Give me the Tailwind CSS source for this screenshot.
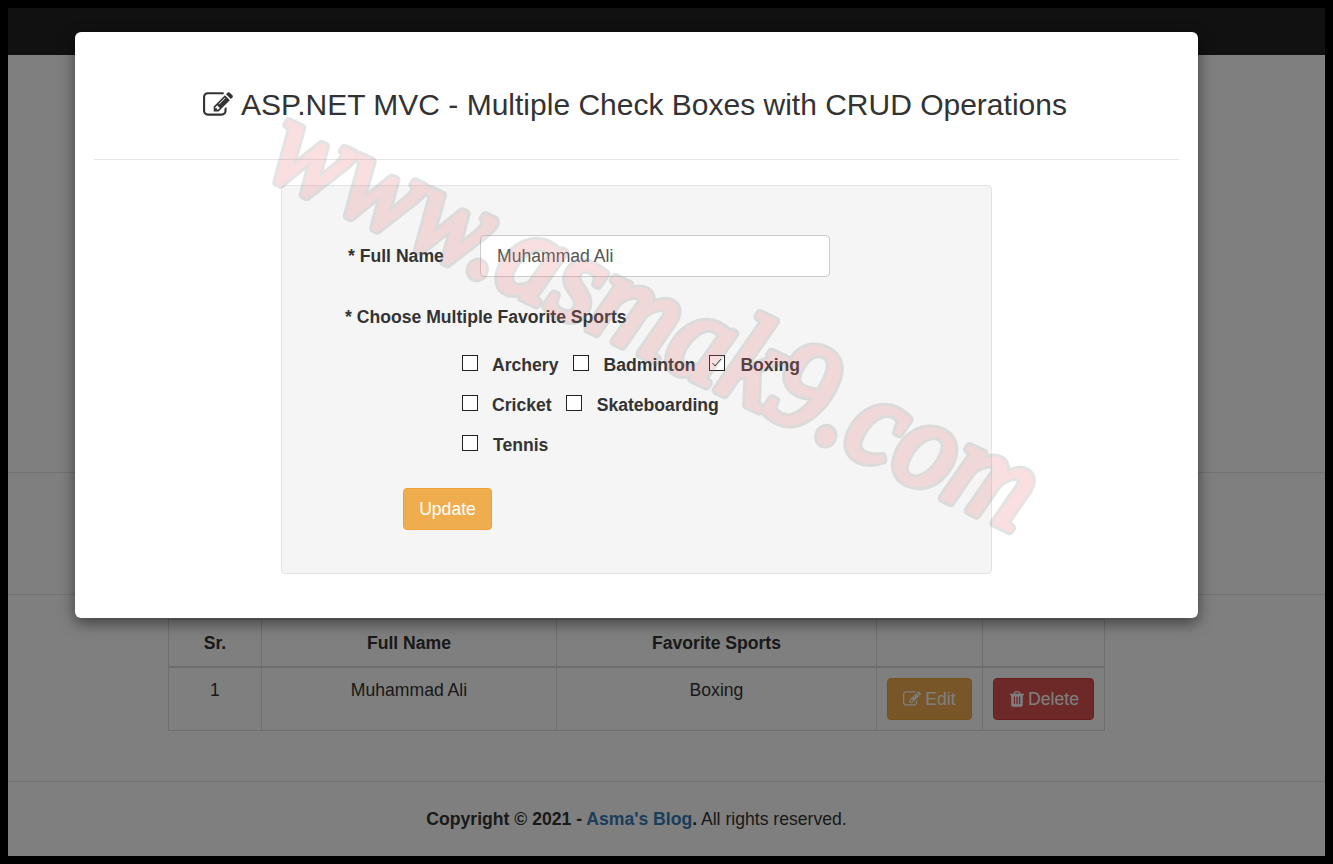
<!DOCTYPE html>
<html>
<head>
<meta charset="utf-8">
<script src="https://cdn.jsdelivr.net/npm/@tailwindcss/browser@4"></script>
<title>ASP.NET MVC</title>
</head>
<body class="bg-black">
<div class="relative h-[864px] w-[1333px] overflow-hidden border-8 border-black font-['Liberation_Sans',Arial,sans-serif] text-[17.6px] text-[#333]">
  <!-- page under the backdrop -->
  <div class="flex h-full flex-col bg-white">
    <div class="h-[47px] shrink-0 bg-[#222]"></div>
    <div class="mt-[417px] h-px shrink-0 bg-[#e5e5e5]"></div>
    <div class="mt-[121px] h-px shrink-0 bg-[#e5e5e5]"></div>
    <table class="ml-[160px] mt-[24px] w-[937px] shrink-0 table-fixed border-collapse text-center">
      <colgroup><col class="w-[93px]"><col class="w-[295px]"><col class="w-[320px]"><col class="w-[106px]"><col class="w-[122px]"></colgroup>
      <thead>
        <tr class="h-[47px]">
          <th class="border border-b-2 border-[#ddd] font-bold">Sr.</th>
          <th class="border border-b-2 border-[#ddd] font-bold">Full Name</th>
          <th class="border border-b-2 border-[#ddd] font-bold">Favorite Sports</th>
          <th class="border border-b-2 border-[#ddd]"></th>
          <th class="border border-b-2 border-[#ddd]"></th>
        </tr>
      </thead>
      <tbody>
        <tr class="h-[64px]">
          <td class="border border-[#ddd] pb-[18px] align-middle">1</td>
          <td class="border border-[#ddd] pb-[18px] align-middle">Muhammad Ali</td>
          <td class="border border-[#ddd] pb-[18px] align-middle">Boxing</td>
          <td class="border border-[#ddd] align-middle">
            <span class="mx-auto flex h-[42px] w-[85px] items-center justify-center gap-[4px] rounded border border-[#eea236] bg-[#f0ad4e] text-white">
              <svg class="h-[18px] w-[18px] fill-current" viewBox="0 0 1792 1792"><path d="M888 1184l116-116-152-152-116 116v56h96v96h56zm440-720q-16-16-33 1l-350 350q-17 17-1 33t33-1l350-350q17-17 1-33zm80 594v190q0 119-84.5 203.5t-203.5 84.5h-832q-119 0-203.5-84.5t-84.5-203.5v-832q0-119 84.5-203.5t203.5-84.5h832q63 0 117 25 15 7 18 23 3 17-9 29l-49 49q-14 14-32 8-23-6-45-6h-832q-66 0-113 47t-47 113v832q0 66 47 113t113 47h832q66 0 113-47t47-113v-126q0-13 9-22l64-64q15-15 35-7t20 29zm-96-738l288 288-672 672h-288v-288zm444 132l-92 92-288-288 92-92q28-28 68-28t68 28l152 152q28 28 28 68t-28 68z"/></svg>
              Edit
            </span>
          </td>
          <td class="border border-[#ddd] align-middle">
            <span class="mx-auto flex h-[42px] w-[101px] items-center justify-center gap-[2px] rounded border border-[#d43f3a] bg-[#d9534f] text-white">
              <svg class="h-[18px] w-[18px] fill-current" viewBox="0 0 1792 1792"><path d="M704 1376v-704q0-14-9-23t-23-9h-64q-14 0-23 9t-9 23v704q0 14 9 23t23 9h64q14 0 23-9t9-23zm256 0v-704q0-14-9-23t-23-9h-64q-14 0-23 9t-9 23v704q0 14 9 23t23 9h64q14 0 23-9t9-23zm256 0v-704q0-14-9-23t-23-9h-64q-14 0-23 9t-9 23v704q0 14 9 23t23 9h64q14 0 23-9t9-23zm-544-992h448l-48-117q-7-9-17-11h-317q-10 2-17 11zm928 32v64q0 14-9 23t-23 9h-96v948q0 83-47 143.5t-113 60.5h-832q-66 0-113-58.5t-47-141.5v-952h-96q-14 0-23-9t-9-23v-64q0-14 9-23t23-9h309l70-167q15-37 54-63t79-26h320q40 0 79 26t54 63l70 167h309q14 0 23 9t9 23z"/></svg>
              Delete
            </span>
          </td>
        </tr>
      </tbody>
    </table>
    <div class="mt-[50px] h-px shrink-0 bg-[#e5e5e5]"></div>
    <p class="mt-[24px] pr-[60px] text-center"><b>Copyright © 2021 - <a class="text-[#337ab7]">Asma's Blog</a>.</b> All rights reserved.</p>
  </div>

  <!-- backdrop -->
  <div class="absolute inset-0 bg-black/50"></div>

  <!-- modal -->
  <div class="absolute left-[67px] top-[24px] h-[586px] w-[1123px] rounded-md bg-white px-[19px] shadow-[0_5px_15px_rgba(0,0,0,0.5)]">
    <div class="flex h-[128px] items-center justify-center border-b border-[#e5e5e5] pt-[18px] pr-[3px] text-[30px]">
      <h1 class="flex items-center gap-[8px] font-normal leading-none">
        <svg class="h-[30px] w-[30px] fill-current" viewBox="0 0 1792 1792"><path d="M888 1184l116-116-152-152-116 116v56h96v96h56zm440-720q-16-16-33 1l-350 350q-17 17-1 33t33-1l350-350q17-17 1-33zm80 594v190q0 119-84.5 203.5t-203.5 84.5h-832q-119 0-203.5-84.5t-84.5-203.5v-832q0-119 84.5-203.5t203.5-84.5h832q63 0 117 25 15 7 18 23 3 17-9 29l-49 49q-14 14-32 8-23-6-45-6h-832q-66 0-113 47t-47 113v832q0 66 47 113t113 47h832q66 0 113-47t47-113v-126q0-13 9-22l64-64q15-15 35-7t20 29zm-96-738l288 288-672 672h-288v-288zm444 132l-92 92-288-288 92-92q28-28 68-28t68 28l152 152q28 28 28 68t-28 68z"/></svg>
        ASP.NET MVC - Multiple Check Boxes with CRUD Operations
      </h1>
    </div>
    <form class="ml-[187px] mt-[25px] h-[389px] w-[711px] rounded border border-[#e3e3e3] bg-[#f5f5f5] pl-[63px] pt-[49px]">
      <div class="flex h-[42px] items-center">
        <label class="ml-[3px] w-[132px] font-bold">* Full Name</label>
        <input value="Muhammad Ali" class="h-[42px] w-[350px] rounded border border-[#ccc] bg-white px-[16px] text-[#555] outline-none">
      </div>
      <p class="mt-[29px] font-bold leading-[22px]">* Choose Multiple Favorite Sports</p>
      <div class="ml-[117px] mt-[17px] flex h-[40px] items-center font-bold">
        <span class="mr-[14px] mb-1 h-[16px] w-[16px] border border-[#222] bg-white"></span><span class="mr-[14px]">Archery</span>
        <span class="mr-[15px] mb-1 h-[16px] w-[16px] border border-[#222] bg-white"></span><span class="mr-[14px]">Badminton</span>
        <span class="mr-[15px] mb-1 h-[16px] w-[16px] border border-[#222] bg-white"><svg class="h-full w-full" viewBox="0 0 14 14"><path d="M2.5 7l2.5 3 6-7" fill="none" stroke="#222" stroke-width="1"/></svg></span><span>Boxing</span>
      </div>
      <div class="ml-[117px] flex h-[40px] items-center font-bold">
        <span class="mr-[14px] mb-1 h-[16px] w-[16px] border border-[#222] bg-white"></span><span class="mr-[14px]">Cricket</span>
        <span class="mr-[15px] mb-1 h-[16px] w-[16px] border border-[#222] bg-white"></span><span>Skateboarding</span>
      </div>
      <div class="ml-[117px] flex h-[40px] items-center font-bold">
        <span class="mr-[15px] mb-1 h-[16px] w-[16px] border border-[#222] bg-white"></span><span>Tennis</span>
      </div>
      <button type="button" class="ml-[58px] mt-[23px] h-[42px] w-[89px] rounded border border-[#eea236] bg-[#f0ad4e] text-white">Update</button>
    </form>
  </div>

  <!-- watermark -->
  <svg class="pointer-events-none absolute left-[-8px] top-[-8px] h-[864px] w-[1333px]" viewBox="0 0 1333 864">
    <g transform="translate(274 146) rotate(25.5)" opacity="0.22" font-family="Liberation Serif" font-style="italic" font-size="126" stroke-linejoin="round">
      <text x="0" y="30" textLength="835" lengthAdjust="spacingAndGlyphs" fill="#838383" stroke="#838383" stroke-width="10">www.asmak9.com</text>
      <text x="0" y="30" textLength="835" lengthAdjust="spacingAndGlyphs" fill="#e77373" stroke="#e77373" stroke-width="4">www.asmak9.com</text>
    </g>
  </svg>
</div>
</body>
</html>
